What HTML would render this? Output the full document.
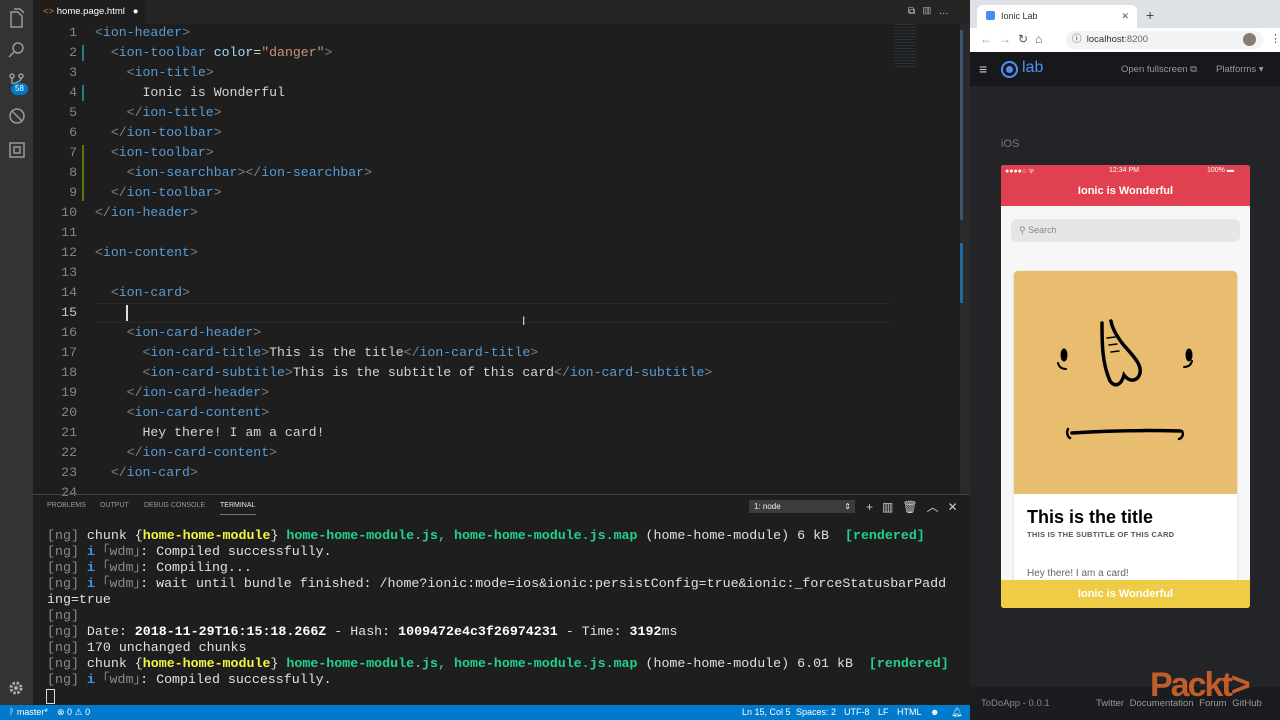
<!DOCTYPE html>
<html><head><meta charset="utf-8"><style>
*{margin:0;padding:0;box-sizing:border-box}
body{width:1280px;height:720px;overflow:hidden;background:#1e1e1e;font-family:"Liberation Sans",sans-serif;position:relative}
.abs{position:absolute}
.mono{font-family:"Liberation Mono",monospace}
.code div{position:absolute;left:0;height:20px;line-height:20px;white-space:pre;font-size:13.2px;color:#d4d4d4}
.ln{position:absolute;width:44px;text-align:right;left:33px;font-size:13.2px;color:#858585;line-height:20px;font-family:"Liberation Mono",monospace}
.b{color:#808080}.t{color:#569cd6}.a{color:#9cdcfe}.s{color:#ce9178}
.term div{position:absolute;left:47px;height:16px;line-height:16px;white-space:pre;font-size:13.3px;color:#e0e0e0}
.g{color:#8a8a8a}.i{color:#3b8eea;font-weight:bold}.y{color:#f5f543;font-weight:bold}.gr{color:#23d18b;font-weight:bold}.w{color:#fff;font-weight:bold}
</style></head><body>
<div class="abs" style="left:0;top:0;width:33px;height:705px;background:#333"></div>
<svg class="abs" style="left:7px;top:8px" width="20" height="160" viewBox="0 0 20 160" fill="none" stroke="#9a9a9a" stroke-width="1.5">
<path d="M4 4h7l4 4v11H4z M7 1h6l4 4"/>
<circle cx="11" cy="40" r="5"/><path d="M7 44l-5 5"/>
<circle cx="5" cy="68" r="2"/><circle cx="14" cy="68" r="2"/><path d="M5 70v6M14 70c0 4-5 4-8 6"/>
<circle cx="10" cy="108" r="7"/><path d="M5 103l10 10"/>
<path d="M3 135h14v14H3z M7 139h6v6H7z"/>
</svg>
<div class="abs" style="left:11px;top:83px;width:17px;height:12px;border-radius:6px;background:#007acc;color:#fff;font-size:8px;text-align:center;line-height:12px">58</div>
<svg class="abs" style="left:8px;top:680px" width="16" height="16" viewBox="0 0 16 16"><circle cx="8" cy="8" r="5" fill="none" stroke="#aaa" stroke-width="3" stroke-dasharray="2.5 1.5"/><circle cx="8" cy="8" r="2" fill="#aaa"/></svg>
<div class="abs" style="left:33px;top:0;width:937px;height:24px;background:#252526"></div>
<div class="abs" style="left:33px;top:0;width:112px;height:24px;background:#1e1e1e;color:#fff;font-size:9.5px;line-height:24px;padding-left:10px"><span style="color:#e37933">&lt;&gt;</span> home.page.html &nbsp;&nbsp;●</div>
<div class="abs" style="left:908px;top:6px;color:#ccc;font-size:10px;letter-spacing:8px">⧉▥…</div>
<div class="abs" style="left:82px;top:45px;width:2px;height:16px;background:#2b7c8c"></div>
<div class="abs" style="left:82px;top:85px;width:2px;height:16px;background:#2b7c8c"></div>
<div class="abs" style="left:82px;top:145px;width:2px;height:56px;background:#587c0c"></div>
<div class="abs" style="left:95px;top:303px;width:797px;height:20px;border-top:1px solid #282828;border-bottom:1px solid #282828"></div>
<div class="abs" style="left:126px;top:305px;width:2px;height:16px;background:#ddd"></div>
<div class="ln" style="top:23px">1<br>2<br>3<br>4<br>5<br>6<br>7<br>8<br>9<br>10<br>11<br>12<br>13<br>14<br><span style="color:#c6c6c6">15</span><br>16<br>17<br>18<br>19<br>20<br>21<br>22<br>23<br>24</div>
<div class="code mono abs" style="left:95px;top:23px">
<div style="top:0"><span class="b">&lt;</span><span class="t">ion-header</span><span class="b">&gt;</span></div>
<div style="top:20px">  <span class="b">&lt;</span><span class="t">ion-toolbar</span> <span class="a">color</span>=<span class="s">"danger"</span><span class="b">&gt;</span></div>
<div style="top:40px">    <span class="b">&lt;</span><span class="t">ion-title</span><span class="b">&gt;</span></div>
<div style="top:60px">      Ionic is Wonderful</div>
<div style="top:80px">    <span class="b">&lt;/</span><span class="t">ion-title</span><span class="b">&gt;</span></div>
<div style="top:100px">  <span class="b">&lt;/</span><span class="t">ion-toolbar</span><span class="b">&gt;</span></div>
<div style="top:120px">  <span class="b">&lt;</span><span class="t">ion-toolbar</span><span class="b">&gt;</span></div>
<div style="top:140px">    <span class="b">&lt;</span><span class="t">ion-searchbar</span><span class="b">&gt;&lt;/</span><span class="t">ion-searchbar</span><span class="b">&gt;</span></div>
<div style="top:160px">  <span class="b">&lt;/</span><span class="t">ion-toolbar</span><span class="b">&gt;</span></div>
<div style="top:180px"><span class="b">&lt;/</span><span class="t">ion-header</span><span class="b">&gt;</span></div>
<div style="top:220px"><span class="b">&lt;</span><span class="t">ion-content</span><span class="b">&gt;</span></div>
<div style="top:260px">  <span class="b">&lt;</span><span class="t">ion-card</span><span class="b">&gt;</span></div>
<div style="top:300px">    <span class="b">&lt;</span><span class="t">ion-card-header</span><span class="b">&gt;</span></div>
<div style="top:320px">      <span class="b">&lt;</span><span class="t">ion-card-title</span><span class="b">&gt;</span>This is the title<span class="b">&lt;/</span><span class="t">ion-card-title</span><span class="b">&gt;</span></div>
<div style="top:340px">      <span class="b">&lt;</span><span class="t">ion-card-subtitle</span><span class="b">&gt;</span>This is the subtitle of this card<span class="b">&lt;/</span><span class="t">ion-card-subtitle</span><span class="b">&gt;</span></div>
<div style="top:360px">    <span class="b">&lt;/</span><span class="t">ion-card-header</span><span class="b">&gt;</span></div>
<div style="top:380px">    <span class="b">&lt;</span><span class="t">ion-card-content</span><span class="b">&gt;</span></div>
<div style="top:400px">      Hey there! I am a card!</div>
<div style="top:420px">    <span class="b">&lt;/</span><span class="t">ion-card-content</span><span class="b">&gt;</span></div>
<div style="top:440px">  <span class="b">&lt;/</span><span class="t">ion-card</span><span class="b">&gt;</span></div>
</div>
<div class="abs" style="left:522px;top:314px;color:#ddd;font-size:12px">I</div>
<div class="abs" style="left:894px;top:22px;width:22px;height:45px;opacity:.25;background:repeating-linear-gradient(#1e1e1e 0 2px,#4a6a90 2px 3px)"></div>
<div class="abs" style="left:960px;top:24px;width:10px;height:471px;background:#2a2a2a"></div>
<div class="abs" style="left:960px;top:30px;width:3px;height:190px;background:#3a5570"></div>
<div class="abs" style="left:960px;top:243px;width:3px;height:60px;background:#1f6a9a"></div>
<div class="abs" style="left:33px;top:494px;width:937px;height:1px;background:#444"></div>
<div class="abs" style="left:47px;top:502px;font-size:7px;color:#999">PROBLEMS</div>
<div class="abs" style="left:100px;top:502px;font-size:7px;color:#999">OUTPUT</div>
<div class="abs" style="left:144px;top:502px;font-size:7px;color:#999">DEBUG CONSOLE</div>
<div class="abs" style="left:220px;top:502px;font-size:7px;color:#e7e7e7">TERMINAL</div>
<div class="abs" style="left:220px;top:514px;width:36px;height:1px;background:#777"></div>
<div class="abs" style="left:749px;top:500px;width:106px;height:13px;background:#3c3c3c;color:#eee;font-size:8px;line-height:13px;padding-left:5px">1: node<span style="float:right;padding-right:4px">⇕</span></div>
<div class="abs" style="left:866px;top:498px;color:#ccc;font-size:12px;letter-spacing:9px">+▥🗑︎︿✕</div>
<div class="term mono">
<div style="top:528px"><span class="g">[ng]</span> chunk {<span class="y">home-home-module</span>} <span class="gr">home-home-module.js, home-home-module.js.map</span> (home-home-module) 6 kB  <span class="gr">[rendered]</span></div>
<div style="top:544px"><span class="g">[ng]</span> <span class="i">i</span> <span class="g">｢wdm｣</span>: Compiled successfully.</div>
<div style="top:560px"><span class="g">[ng]</span> <span class="i">i</span> <span class="g">｢wdm｣</span>: Compiling...</div>
<div style="top:576px"><span class="g">[ng]</span> <span class="i">i</span> <span class="g">｢wdm｣</span>: wait until bundle finished: /home?ionic:mode=ios&amp;ionic:persistConfig=true&amp;ionic:_forceStatusbarPadd</div>
<div style="top:592px">ing=true</div>
<div style="top:608px"><span class="g">[ng]</span></div>
<div style="top:624px"><span class="g">[ng]</span> Date: <span class="w">2018-11-29T16:15:18.266Z</span> - Hash: <span class="w">1009472e4c3f26974231</span> - Time: <span class="w">3192</span>ms</div>
<div style="top:640px"><span class="g">[ng]</span> 170 unchanged chunks</div>
<div style="top:656px"><span class="g">[ng]</span> chunk {<span class="y">home-home-module</span>} <span class="gr">home-home-module.js, home-home-module.js.map</span> (home-home-module) 6.01 kB  <span class="gr">[rendered]</span></div>
<div style="top:672px"><span class="g">[ng]</span> <span class="i">i</span> <span class="g">｢wdm｣</span>: Compiled successfully.</div>
</div>
<div class="abs" style="left:46px;top:689px;width:9px;height:15px;border:1px solid #ddd"></div>
<div class="abs" style="left:0;top:705px;width:970px;height:15px;background:#007acc;color:#fff;font-size:9px;line-height:15px">
<span class="abs" style="left:9px">ᚹ master*</span><span class="abs" style="left:57px">⊗ 0 ⚠ 0</span>
<span class="abs" style="left:742px">Ln 15, Col 5</span><span class="abs" style="left:796px">Spaces: 2</span><span class="abs" style="left:844px">UTF-8</span><span class="abs" style="left:878px">LF</span><span class="abs" style="left:897px">HTML</span><span class="abs" style="left:930px">☻</span><span class="abs" style="left:951px">🔔︎</span></div>
<div class="abs" style="left:970px;top:0;width:310px;height:720px;background:#222428"></div>
<div class="abs" style="left:970px;top:0;width:310px;height:32px;background:#dee1e6"></div>
<div class="abs" style="left:977px;top:5px;width:160px;height:27px;background:#fff;border-radius:6px 6px 0 0;font-size:9px;color:#333;line-height:22px;padding-left:9px"><span style="display:inline-block;width:9px;height:9px;background:#4a8af4;border-radius:2px;vertical-align:-1px;margin-right:6px"></span>Ionic Lab<span style="float:right;margin-right:8px;color:#555">✕</span></div>
<div class="abs" style="left:1146px;top:7px;font-size:14px;color:#444">+</div>
<div class="abs" style="left:970px;top:28px;width:310px;height:24px;background:#fff"></div>
<div class="abs" style="left:980px;top:32px;font-size:12px;color:#999;letter-spacing:7px">←→<span style="color:#555">↻⌂</span></div>
<div class="abs" style="left:1066px;top:31px;width:197px;height:18px;background:#f1f3f4;border-radius:9px;font-size:9.5px;color:#333;line-height:18px;padding-left:6px">ⓘ &nbsp;localhost<span style="color:#666">:8200</span><span style="float:right;margin-right:9px">☆</span></div>
<div class="abs" style="left:1243px;top:33px;width:13px;height:13px;border-radius:50%;background:#8a7a70"></div>
<div class="abs" style="left:1270px;top:32px;font-size:11px;color:#555">⋮</div>
<div class="abs" style="left:970px;top:52px;width:310px;height:34px;background:#16181c"></div>
<div class="abs" style="left:979px;top:61px;font-size:14px;color:#ccc">≡</div>
<div class="abs" style="left:1001px;top:61px;width:17px;height:17px;border:2px solid #4f8ef7;border-radius:50%"></div>
<div class="abs" style="left:1006px;top:66px;width:7px;height:7px;background:#4f8ef7;border-radius:50%"></div>
<div class="abs" style="left:1022px;top:59px;font-size:16px;color:#4f8ef7">lab</div>
<div class="abs" style="left:1121px;top:64px;font-size:9.5px;color:#999">Open fullscreen ⧉</div>
<div class="abs" style="left:1216px;top:64px;font-size:9.5px;color:#999">Platforms ▾</div>
<div class="abs" style="left:1001px;top:138px;font-size:11px;color:#777"> iOS</div>
<div class="abs" style="left:1001px;top:165px;width:249px;height:443px;background:#f7f7f7;border-radius:3px;overflow:hidden">
<div class="abs" style="left:0;top:0;width:249px;height:41px;background:#e0404f"></div>
<div class="abs" style="left:4px;top:2px;font-size:7px;color:#fff">●●●●○ ᯤ</div>
<div class="abs" style="left:108px;top:2px;font-size:7px;color:#fff">12:34 PM</div>
<div class="abs" style="left:206px;top:2px;font-size:7px;color:#fff">100% ▬</div>
<div class="abs" style="left:0;top:20px;width:249px;text-align:center;font-size:11px;font-weight:bold;color:#fff">Ionic is Wonderful</div>
<div class="abs" style="left:10px;top:54px;width:229px;height:23px;background:#e6e6e6;border-radius:6px;font-size:9px;color:#888;line-height:23px;padding-left:8px">⚲ Search</div>
<div class="abs" style="left:13px;top:106px;width:223px;height:320px;background:#fff;border-radius:4px;overflow:hidden;box-shadow:0 1px 3px rgba(0,0,0,.15)">
<div style="height:223px;background:#e8bd6f;position:relative">
<svg width="223" height="223" viewBox="0 0 223 223" style="position:absolute;left:0;top:0" fill="none" stroke="#000" stroke-linecap="round">
<ellipse cx="50" cy="84" rx="3" ry="6" fill="#000"/><ellipse cx="175" cy="84" rx="3" ry="6" fill="#000"/>
<path d="M44 92c1 4 4 6 8 6M170 96c4 0 7-2 8-6" stroke-width="2"/>
<path d="M88 52c0 20 0 40 8 58c6 8 12 2 14-6c6 8 14 6 16-2c2-10-10-20-18-30c-6-8-10-16-11-22" stroke-width="3.5"/>
<path d="M93 67l8-1M95 74l8-1M97 81l8-1" stroke-width="1.5"/>
<path d="M58 162c30-2 70-3 108-2" stroke-width="3.5"/><path d="M54 158c-2 4 0 8 2 9M168 160c2 4 0 7-3 8" stroke-width="2.5"/>
</svg></div>
<div class="abs" style="left:13px;top:236px;font-size:18px;font-weight:bold;color:#000">This is the title</div>
<div class="abs" style="left:13px;top:259px;font-size:7.5px;font-weight:bold;color:#555;letter-spacing:.3px">THIS IS THE SUBTITLE OF THIS CARD</div>
<div class="abs" style="left:13px;top:297px;font-size:10px;color:#666">Hey there! I am a card!</div>
</div>
<div class="abs" style="left:0;top:415px;width:249px;height:28px;background:#efcc45;text-align:center;line-height:28px;font-size:11px;font-weight:bold;color:#fff">Ionic is Wonderful</div>
</div>
<div class="abs" style="left:970px;top:687px;width:310px;height:33px;background:#1a1c20"></div>
<div class="abs" style="left:981px;top:698px;font-size:9.5px;color:#888">ToDoApp - 0.0.1</div>
<div class="abs" style="left:1096px;top:698px;font-size:9.5px;color:#999;word-spacing:3px">Twitter Documentation Forum GitHub</div>
<div class="abs" style="left:1150px;top:666px;font-size:34px;font-weight:bold;color:#e0692a;opacity:.85;letter-spacing:-2px">Packt&gt;</div>
</body></html>
